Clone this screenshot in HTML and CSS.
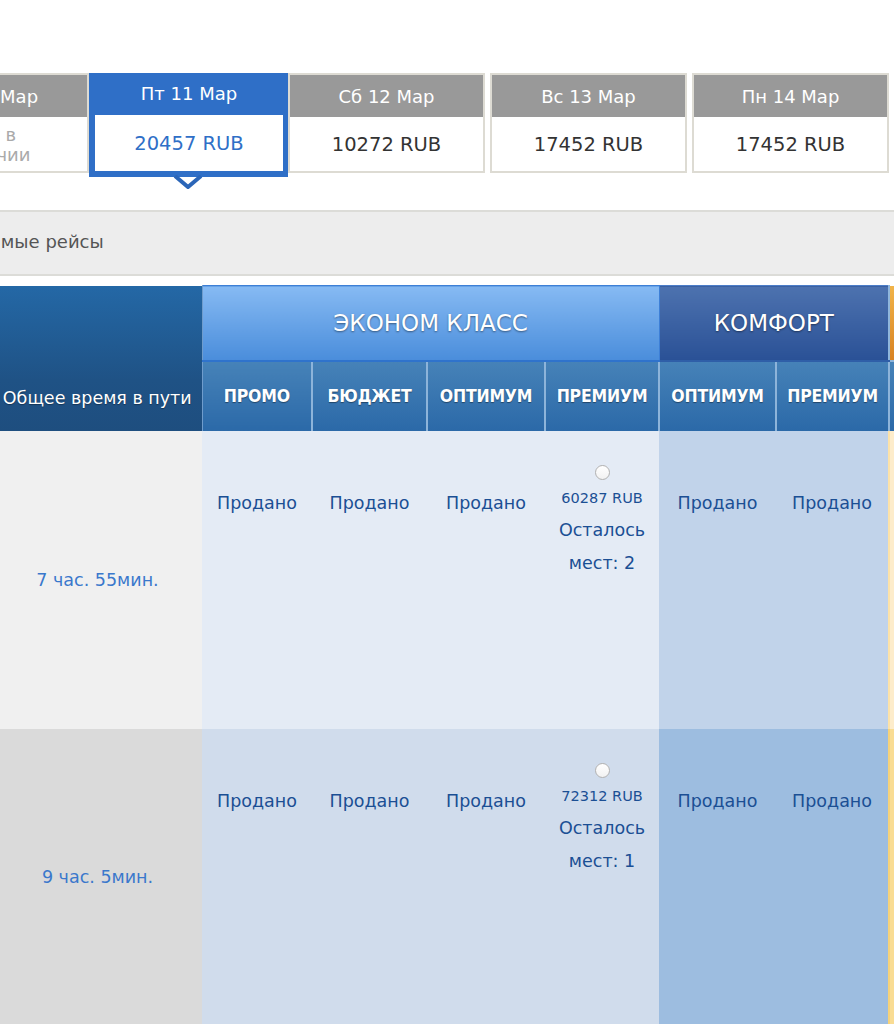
FILE: index.html
```html
<!DOCTYPE html>
<html lang="ru">
<head>
<meta charset="utf-8">
<title>Выбор рейса</title>
<link rel="stylesheet" href="styles.css">
</head>
<body>
<div class="page">
  <div class="dates">
    <div class="tab">
      <div class="tab-head">Чт 10 Мар</div>
      <div class="tab-body muted">Нет в<br>наличии</div>
    </div>
    <div class="tab sel">
      <div class="tab-head">Пт 11 Мар</div>
      <div class="tab-body">20457 RUB</div>
      <svg class="pointer" width="30" height="14" viewBox="0 0 30 14"><polyline points="2,1 15,12 28,1" fill="none" stroke="#2b66b8" stroke-width="4"/></svg>
    </div>
    <div class="tab">
      <div class="tab-head">Сб 12 Мар</div>
      <div class="tab-body">10272 RUB</div>
    </div>
    <div class="tab">
      <div class="tab-head">Вс 13 Мар</div>
      <div class="tab-body">17452 RUB</div>
    </div>
    <div class="tab">
      <div class="tab-head">Пн 14 Мар</div>
      <div class="tab-body">17452 RUB</div>
    </div>
  </div>

  <div class="bar"><span class="bar-text">Прямые рейсы</span></div>

  <table class="fares">
    <colgroup>
      <col class="c-time"><col class="c-promo"><col class="c-budget"><col class="c-opt"><col class="c-prem"><col class="c-copt"><col class="c-cprem"><col class="c-extra">
    </colgroup>
    <thead>
      <tr class="h1">
        <th class="time" rowspan="2"><span>Общее время в пути</span></th>
        <th class="econ" colspan="4">ЭКОНОМ КЛАСС</th>
        <th class="comf" colspan="2">КОМФОРТ</th>
        <th class="extra"></th>
      </tr>
      <tr class="h2">
        <th class="sub first">ПРОМО</th>
        <th class="sub">БЮДЖЕТ</th>
        <th class="sub">ОПТИМУМ</th>
        <th class="sub">ПРЕМИУМ</th>
        <th class="sub">ОПТИМУМ</th>
        <th class="sub">ПРЕМИУМ</th>
        <th class="sub"></th>
      </tr>
    </thead>
    <tbody>
      <tr class="r1">
        <td class="dur">7 час. 55мин.</td>
        <td class="e"><div class="sold">Продано</div></td>
        <td class="e"><div class="sold">Продано</div></td>
        <td class="e"><div class="sold">Продано</div></td>
        <td class="e"><div class="offer"><span class="radio"></span><div class="price">60287 RUB</div><div class="left">Осталось<br>мест: 2</div></div></td>
        <td class="c"><div class="sold">Продано</div></td>
        <td class="c"><div class="sold">Продано</div></td>
        <td class="x"></td>
      </tr>
      <tr class="r2">
        <td class="dur">9 час. 5мин.</td>
        <td class="e"><div class="sold">Продано</div></td>
        <td class="e"><div class="sold">Продано</div></td>
        <td class="e"><div class="sold">Продано</div></td>
        <td class="e"><div class="offer"><span class="radio"></span><div class="price">72312 RUB</div><div class="left">Осталось<br>мест: 1</div></div></td>
        <td class="c"><div class="sold">Продано</div></td>
        <td class="c"><div class="sold">Продано</div></td>
        <td class="x"></td>
      </tr>
    </tbody>
  </table>
</div>
</body>
</html>
```

FILE: styles.css
```css
html, body {
  margin: 0;
  padding: 0;
  background: #fff;
  overflow: hidden;
}
body {
  font-family: "DejaVu Sans", Verdana, sans-serif;
  width: 894px;
  height: 1024px;
}
.page {
  margin-left: -110px;
  width: 1120px;
  padding-top: 73px;
}

/* date tabs */
.dates {
  display: flex;
  align-items: flex-start;
  padding-left: 2px;
  height: 137px;
}
.tab {
  width: 197px;
  height: 100px;
  box-sizing: border-box;
  border: 2px solid #dddbd3;
  margin-right: 5px;
  display: flex;
  flex-direction: column;
  background: #fff;
  flex: none;
}
.tab-head {
  height: 42px;
  background: #999;
  color: #fff;
  font-size: 18px;
  display: flex;
  align-items: center;
  justify-content: center;
}
.tab-body {
  flex: 1;
  display: flex;
  align-items: center;
  justify-content: center;
  text-align: center;
  font-size: 19.5px;
  color: #333;
}
.tab-body.muted {
  color: #aaa;
  font-size: 18px;
  line-height: 20px;
  padding-top: 2px;
}
.tab.sel {
  position: relative;
  width: 199px;
  height: 104px;
  margin-left: -5px;
  margin-right: 0;
  border: none;
  background: #2f6fc7;
  padding: 0 5px 6px 6px;
}
.tab.sel .tab-head {
  background: transparent;
  height: 42px;
  box-sizing: border-box;
  padding-bottom: 2px;
}
.tab.sel .tab-body {
  background: #fff;
  color: #2f6fc7;
}
.pointer {
  position: absolute;
  left: 84px;
  top: 102px;
}

/* bar */
.bar {
  border-top: 2px solid #dcdcd8;
  border-bottom: 2px solid #dcdcd8;
  background: #ededed;
  display: flex;
  align-items: center;
  padding-left: 75px;
  padding-bottom: 4px;
  height: 58px;
}
.bar-text {
  font-size: 18px;
  color: #555;
}

/* table */
.fares {
  margin-top: 9px;
  margin-left: 103px;
  border-collapse: collapse;
  table-layout: fixed;
  width: 1016px;
}
.c-time { width: 209px; }
.c-promo { width: 110px; }
.c-budget { width: 115px; }
.c-opt { width: 118px; }
.c-prem { width: 114px; }
.c-copt { width: 117px; }
.c-cprem { width: 113px; }
.c-extra { width: 120px; }

.fares th {
  padding: 0;
  color: #fff;
  font-weight: normal;
  text-shadow: 0 1px 1px rgba(0, 0, 0, 0.35);
}
.h1 th {
  height: 75px;
  box-sizing: border-box;
}
.h2 th {
  height: 70px;
  box-sizing: border-box;
}
.fares th.time {
  background: linear-gradient(#2468a6, #1f5285 65%, #1e4e7f);
  vertical-align: bottom;
  font-size: 17.5px;
  padding-bottom: 23px;
  border-right: 1px solid #6f9ccc;
  white-space: nowrap;
}
.fares th.econ {
  background: linear-gradient(#86baf3, #4a8ddb);
  border: 1px solid #3d7fd6;
  border-bottom: 2px solid #2f73cc;
  font-size: 23px;
  text-shadow: 0 1px 2px rgba(0, 0, 0, 0.45);
}
.fares th.comf {
  background: linear-gradient(#4d72af, #2a5196);
  border: 1px solid #4c7dc8;
  border-bottom: 2px solid #2f5fa8;
  font-size: 23px;
  text-shadow: 0 1px 2px rgba(0, 0, 0, 0.45);
}
.fares th.extra {
  background: linear-gradient(#f1b44a, #d88222);
  border-left: 2px solid #8fb6dc;
}
.fares th.sub {
  background: linear-gradient(#4682b8, #2b69a8);
  border-left: 2px solid #8db4da;
  border-top: 2px solid #8db4da;
  font-family: "DejaVu Sans Condensed", "DejaVu Sans", sans-serif;
  font-weight: bold;
  font-size: 17.5px;
  letter-spacing: -0.2px;
  text-shadow: 0 1px 1px rgba(0, 0, 0, 0.4);
}
.fares th.sub.first {
  border-left: 1px solid #7fa6d0;
}

.fares td {
  padding: 0;
  vertical-align: top;
  text-align: center;
}
.r1 td { height: 298px; }
.r2 td { height: 296px; }
.fares td.dur {
  vertical-align: middle;
  font-size: 17.5px;
  color: #3a78cc;
}
.r1 .dur { background: #f0f0f0; }
.r2 .dur { background: #dadada; }
.r1 .e { background: #e4ebf5; }
.r2 .e { background: #d0dcec; }
.r1 .c { background: #c1d3ea; }
.r2 .c { background: #9dbde0; }
.r1 .x { background: #fdeccb; border-left: 2px solid #fde2a8; }
.r2 .x { background: #f9dc94; border-left: 2px solid #f6d27a; }

.sold {
  padding-top: 56px;
  font-size: 17.5px;
  line-height: 33px;
  color: #1b4f94;
}
.offer {
  padding-top: 34px;
  color: #1b4f94;
  display: flex;
  flex-direction: column;
  align-items: center;
}
.radio {
  width: 15px;
  height: 15px;
  border-radius: 50%;
  border: 1px solid #b0b0b0;
  background: linear-gradient(#fff, #f2f2f2);
  box-sizing: border-box;
  display: block;
}
.price {
  font-size: 14.5px;
  line-height: 20px;
  margin-top: 8px;
}
.left {
  font-size: 17.5px;
  line-height: 33px;
  margin-top: 6px;
}
```
